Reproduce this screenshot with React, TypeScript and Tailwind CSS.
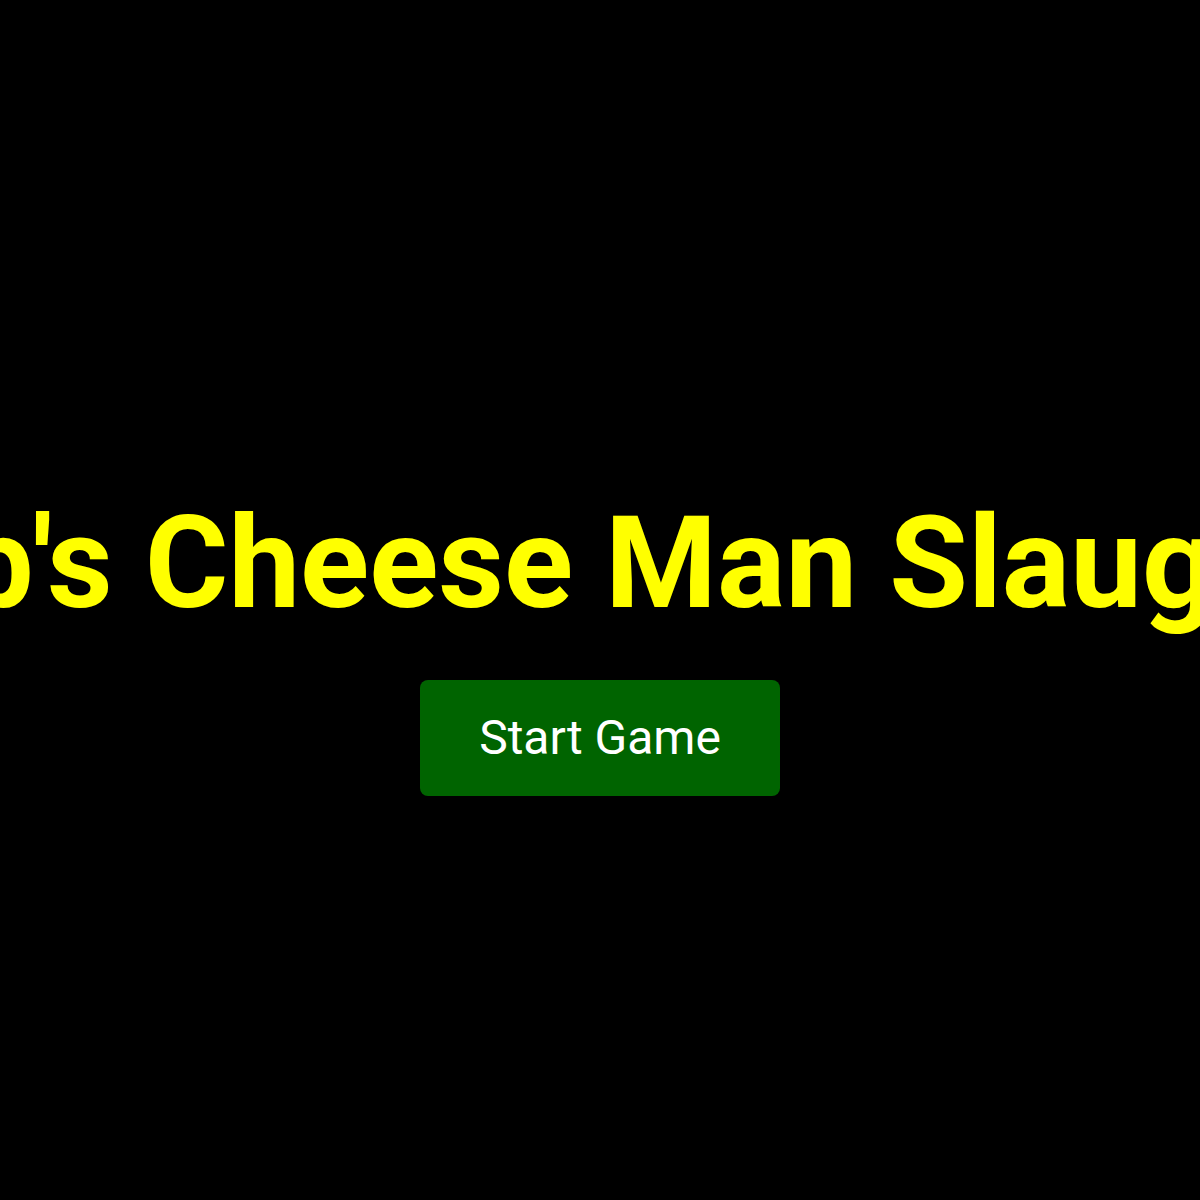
export default function App() {
    return (
        <div className="min-h-screen w-full bg-black flex flex-col items-center justify-center pt-[63px] overflow-hidden font-['Roboto',sans-serif]">
            <h1 className="pl-[54px] text-[128px] font-bold text-[#ffff00] whitespace-nowrap shrink-0">
                Bob's Cheese Man Slaughter
            </h1>
            <button className="mt-[21px] bg-[#006400] text-white text-[48px] px-[59px] py-[34px] leading-none rounded-lg">
                Start Game
            </button>
        </div>
    )
}
